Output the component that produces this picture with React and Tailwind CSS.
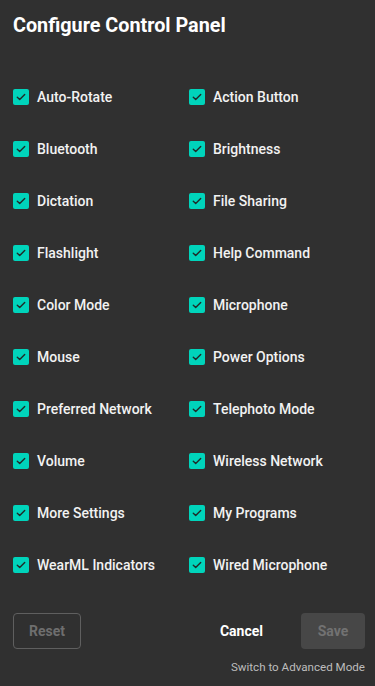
const left = ["Auto-Rotate", "Bluetooth", "Dictation", "Flashlight", "Color Mode", "Mouse", "Preferred Network", "Volume", "More Settings", "WearML Indicators"];
const right = ["Action Button", "Brightness", "File Sharing", "Help Command", "Microphone", "Power Options", "Telephoto Mode", "Wireless Network", "My Programs", "Wired Microphone"];

function Item({ label }) {
  return (
    <label className="flex items-center gap-2 h-[52px]">
      <span className="w-4 h-4 bg-[#00d4bb] rounded-[2px] flex items-center justify-center shrink-0">
        <svg viewBox="0 0 16 16" className="w-4 h-4" fill="none" stroke="#1f2a28" strokeWidth="1.4" strokeLinecap="round" strokeLinejoin="round">
          <path d="M4.3 8.3l2.4 2.3 5-5" />
        </svg>
      </span>
      <span className="text-[14px] font-medium text-[#f2f2f2]">{label}</span>
    </label>
  );
}

export default function App() {
  const items = [];
  left.forEach((l, i) => {
    items.push(<Item key={"l" + i} label={l} />);
    items.push(<Item key={"r" + i} label={right[i]} />);
  });
  return (
    <div className="w-[375px] h-[686px] bg-[#303030] pl-[13px] pr-[10px] pt-[12px] font-['Roboto',sans-serif] overflow-hidden">
      <h1 className="text-[19.8px] leading-[28px] font-bold text-white">Configure Control Panel</h1>
      <div className="grid grid-cols-2 mt-[31px]">{items}</div>
      <div className="flex items-center mt-[22px]">
        <button className="w-[68px] h-[36px] border border-[#5f5f5f] rounded-[4px] text-[14px] font-bold text-[#6e6e6e]">Reset</button>
        <button className="ml-auto mr-[38px] text-[14px] font-bold text-white">Cancel</button>
        <button className="w-[64px] h-[36px] rounded-[4px] bg-[#474747] text-[14px] font-bold text-[#727272]">Save</button>
      </div>
      <div className="text-right text-[11.6px] text-[#bdbdbd] mt-[10px]">Switch to Advanced Mode</div>
    </div>
  );
}
